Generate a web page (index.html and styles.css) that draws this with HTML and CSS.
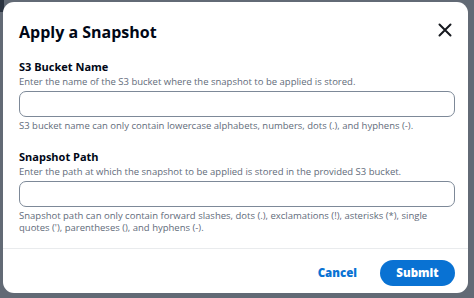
FILE: index.html
```html
<!DOCTYPE html>
<html lang="en">
<head>
<meta charset="utf-8">
<title>Apply a Snapshot</title>
<link rel="stylesheet" href="styles.css">
</head>
<body>
<div class="backdrop">
  <div class="topbar"></div>
  <div class="modal" role="dialog" aria-labelledby="modal-title">
    <div class="modal-header">
      <h2 id="modal-title" class="modal-title">Apply a Snapshot</h2>
      <button class="close-btn" aria-label="Close">
        <svg width="14" height="14" viewBox="0 0 14 14" aria-hidden="true">
          <path d="M1.5 1.5 L12.5 12.5 M12.5 1.5 L1.5 12.5" stroke="#16191f" stroke-width="2" stroke-linecap="round" fill="none"/>
        </svg>
      </button>
    </div>
    <div class="modal-body">
      <div class="field">
        <label class="field-label" for="bucket">S3 Bucket Name</label>
        <div class="field-desc">Enter the name of the S3 bucket where the snapshot to be applied is stored.</div>
        <input id="bucket" class="field-input" type="text">
        <div class="field-constraint">S3 bucket name can only contain lowercase alphabets, numbers, dots (.), and hyphens (-).</div>
      </div>
      <div class="field field-second">
        <label class="field-label" for="path">Snapshot Path</label>
        <div class="field-desc">Enter the path at which the snapshot to be applied is stored in the provided S3 bucket.</div>
        <input id="path" class="field-input" type="text">
        <div class="field-constraint">Snapshot path can only contain forward slashes, dots (.), exclamations (!), asterisks (*), single quotes ('), parentheses (), and hyphens (-).</div>
      </div>
    </div>
    <div class="modal-footer">
      <button class="btn-link">Cancel</button>
      <button class="btn-primary">Submit</button>
    </div>
  </div>
</div>
</body>
</html>
```

FILE: styles.css
```css
* { box-sizing: border-box; }

html, body {
  margin: 0;
  padding: 0;
}

body {
  width: 474px;
  height: 298px;
  overflow: hidden;
  background: #5f6772;
  font-family: "Open Sans", "Noto Sans", "DejaVu Sans", sans-serif;
  color: #000716;
}

.backdrop {
  position: relative;
  width: 474px;
  height: 298px;
  padding: 2px 6px 0 3px;
  background: #626a75;
}

.topbar {
  position: absolute;
  left: 0;
  top: 0;
  width: 4px;
  height: 12px;
  background: #2a3340;
}

.modal {
  position: relative;
  width: 465px;
  height: 291px;
  background: #ffffff;
  border-radius: 11px;
  display: flex;
  flex-direction: column;
}

.modal-header {
  display: flex;
  align-items: flex-start;
  justify-content: space-between;
  padding: 19px 13px 0 16px;
}

.modal-title {
  margin: 0;
  font-size: 16px;
  line-height: 22px;
  font-weight: 700;
  color: #000716;
}

.close-btn {
  border: 0;
  background: transparent;
  padding: 0;
  margin: 2px 3px 0 0;
  width: 14px;
  height: 14px;
  display: flex;
}

.modal-body {
  padding: 17px 13px 13px 16px;
  display: flex;
  flex-direction: column;
}

.field {
  display: flex;
  flex-direction: column;
}

.field-second {
  margin-top: 17px;
}

.field-label {
  font-size: 11px;
  line-height: 14px;
  font-weight: 700;
  color: #000716;
}

.field-desc {
  margin-top: 1px;
  font-size: 9.5px;
  line-height: 13px;
  color: #5f6b7a;
}

.field-input {
  margin-top: 3px;
  height: 26px;
  width: 100%;
  border: 1.5px solid #7d8998;
  border-radius: 7px;
  background: #ffffff;
}

.field-constraint {
  margin-top: 3px;
  font-size: 9.5px;
  line-height: 12.5px;
  color: #5f6b7a;
}

.modal-footer {
  border-top: 1px solid #e9ebed;
  margin: 0;
  padding: 11px 13px 0 16px;
  display: flex;
  justify-content: flex-end;
  align-items: center;
}

.btn-link {
  border: 0;
  background: transparent;
  font-family: inherit;
  font-size: 11.5px;
  font-weight: 800;
  color: #0972d3;
  padding: 0 12px;
  margin-right: 11px;
  height: 26px;
}

.btn-primary {
  border: 0;
  background: #0972d3;
  color: #ffffff;
  font-family: inherit;
  font-size: 11.5px;
  font-weight: 800;
  height: 26px;
  width: 75px;
  border-radius: 13px;
  padding: 0;
}
```
